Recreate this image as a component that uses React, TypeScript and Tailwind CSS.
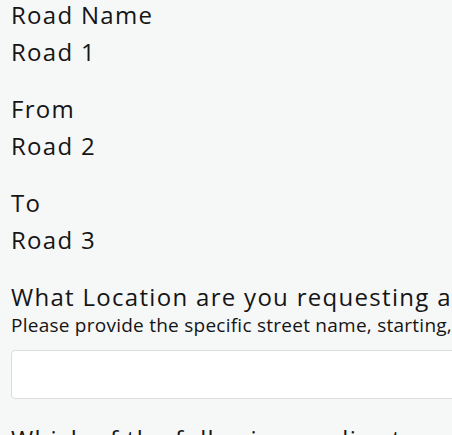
export default function App() {
  const fields = [
    { label: 'Road Name', value: 'Road 1' },
    { label: 'From', value: 'Road 2' },
    { label: 'To', value: 'Road 3' },
  ]

  return (
    <div
      className="min-h-screen w-[452px] h-[435px] overflow-hidden bg-[#f6f7f7] text-[#151515] px-[11px]"
      style={{ fontFamily: '"Open Sans", "Noto Sans", sans-serif' }}
    >
      <div className="-mt-[4px]">
        {fields.map(f => (
          <div key={f.label} className="mb-[20px]">
            <div className="text-[24px] leading-[37px] tracking-[1.3px]">{f.label}</div>
            <div className="text-[24px] leading-[37px] tracking-[1.3px]">{f.value}</div>
          </div>
        ))}
      </div>

      <div className="whitespace-nowrap">
        <div className="text-[24px] leading-[37px] tracking-[1.3px]">What Location are you requesting a new sign for?</div>
        <div className="text-[19px] leading-[26px] tracking-[0.25px] -mt-[3px]">
          Please provide the specific street name, starting, and ending cross streets.
        </div>
        <div className="mt-[12px] w-[600px] h-[49px] bg-white border border-[#dcdcdc] rounded-[4px]" />
        <div className="mt-[21px] text-[24px] leading-[37px] tracking-[1.3px]">Which of the following applies to your request?</div>
      </div>
    </div>
  )
}
